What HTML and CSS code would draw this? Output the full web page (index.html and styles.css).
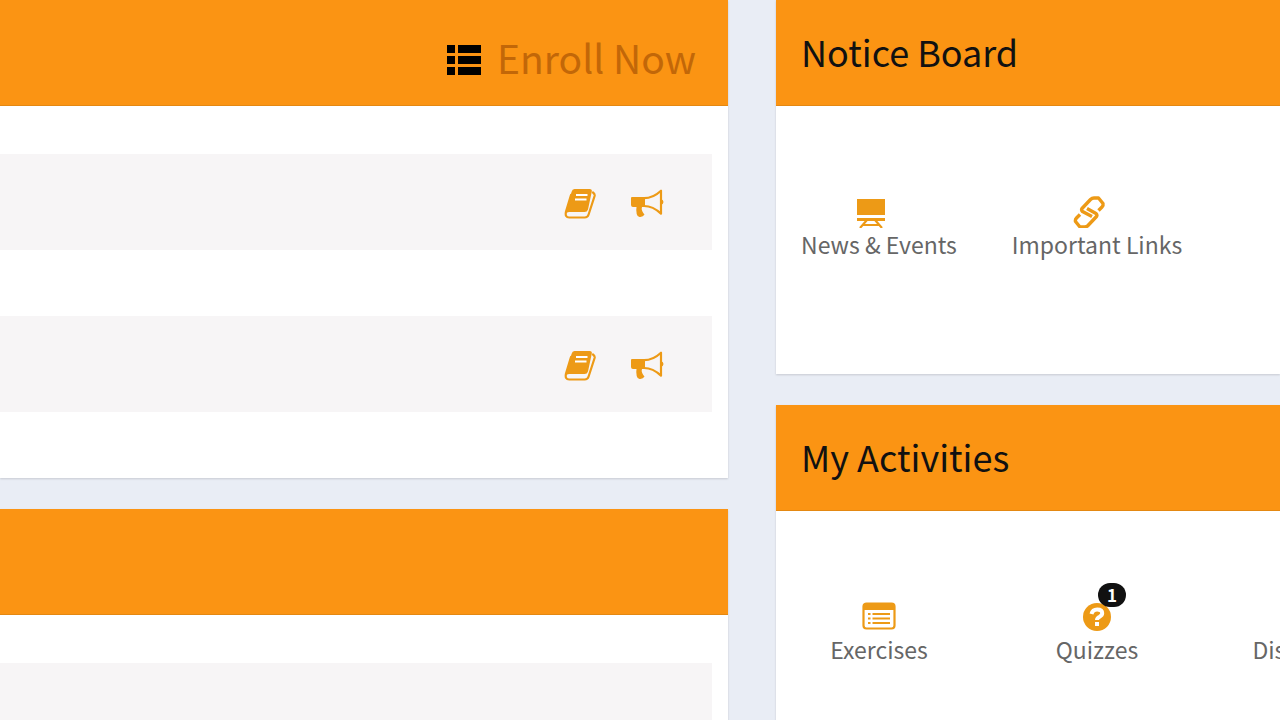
FILE: index.html
```html
<!DOCTYPE html>
<html lang="en">
<head>
  <meta charset="UTF-8">
  <title>Dashboard</title>
  <link rel="stylesheet" href="styles.css">
</head>
<body>
  <svg class="sprite" aria-hidden="true">
    <symbol id="book" viewBox="0 0 32 32">
      <path fill="currentColor" d="M10.500 1H25.500q3 0 2.200 3L24 21.500q-.8 2.500-3.500 2.500H5q-2 0-3 1.500L7.500 4q.8-3 3-3z"/>
      <path fill="none" stroke="currentColor" stroke-width="2.200" stroke-linejoin="round" stroke-linecap="round" d="M7 7 2 23.500q-1.300 6 3.200 6h15.500q3 0 3.900-3L30.600 8q.5-2-1.600-3.500"/>
      <path fill="none" stroke="#fff" stroke-width="2" d="M12 7h11.500M11 11.500h11.500"/>
    </symbol>
    <symbol id="bullhorn" viewBox="0 0 34 30">
      <path fill="currentColor" d="M2 8h13v10h-3q-.8 2 .2 4 1 2 2.300 3.600-1.500 2.800-5 2.400-2.200-.4-2.800-3-.8-3.600-.2-7H3q-2 0-2-2V9q0-1 1-1z"/>
      <path fill="none" stroke="currentColor" stroke-width="2.200" stroke-linejoin="round" d="M14 9.200q9 0 17-7.500v23Q23 17 14 17"/>
      <path fill="currentColor" d="M31 10q2.500 1 2.500 3T31 16z"/>
    </symbol>
  </svg>

  <main class="dashboard">
    <div class="column">
      <section class="box">
        <header class="box-header right">
          <a href="#" class="enroll">
            <svg class="list-icon" viewBox="0 -6 34 36" aria-hidden="true">
              <path d="M0 0h8v8H0zM11 0h23v8H11zM0 11h8v8H0zM11 11h23v8H11zM0 22h8v8H0zM11 22h23v8H11z"/>
            </svg>
            Enroll Now
          </a>
        </header>
        <div class="box-body courses">
          <div class="course">
            <a href="#" aria-label="Course book"><svg class="book"><use href="#book"/></svg></a>
            <a href="#" aria-label="Announcements"><svg class="bullhorn"><use href="#bullhorn"/></svg></a>
          </div>
          <div class="course">
            <a href="#" aria-label="Course book"><svg class="book"><use href="#book"/></svg></a>
            <a href="#" aria-label="Announcements"><svg class="bullhorn"><use href="#bullhorn"/></svg></a>
          </div>
        </div>
      </section>

      <section class="box">
        <header class="box-header"></header>
        <div class="box-body courses">
          <div class="course"></div>
        </div>
      </section>
    </div>

    <div class="column">
      <section class="box">
        <header class="box-header"><h2>Notice Board</h2></header>
        <div class="box-body tiles">
          <a href="#" class="tile">
            <svg class="tile-icon offset" viewBox="0 0 34 34" aria-hidden="true">
              <path fill="currentColor" d="M3 5h28v16H3zM3 24h28v3H3z"/>
              <path fill="none" stroke="currentColor" stroke-width="2.200" d="M13 26 6 34M21 26l7 8M9 31h16"/>
            </svg>
            News &amp; Events
          </a>
          <a href="#" class="tile">
            <svg class="tile-icon offset" viewBox="0 0 34 34" aria-hidden="true">
              <g fill="none" stroke="currentColor" stroke-width="3.400" stroke-linejoin="round">
                <path d="M20 22.500 10.500 17.500Q9 16 10 14.500L18.500 5.500Q20 4 22 4H26.500L31 9.500Q31.500 11.500 30 13L26.500 16.500"/>
                <path d="M15 14.500 24 19.500Q25.500 21 24.500 22.500L16 31.500Q14.500 33 12.500 33H8L3.500 27.500Q3 25.500 4.500 24L8 20.500"/>
              </g>
            </svg>
            Important Links
          </a>
        </div>
      </section>

      <section class="box">
        <header class="box-header"><h2>My Activities</h2></header>
        <div class="box-body tiles">
          <a href="#" class="tile">
            <svg class="tile-icon" viewBox="0 0 34 34" aria-hidden="true">
              <rect x="1.500" y="4.500" width="31" height="25" rx="3" fill="none" stroke="currentColor" stroke-width="2.200"/>
              <path fill="currentColor" d="M2 5h30v6H2z"/>
              <path stroke="currentColor" stroke-width="2" d="M6 15h2.500M6 19.500h2.500M6 24h2.500M10.500 15H28M10.500 19.500H28M10.500 24H28"/>
            </svg>
            Exercises
          </a>
          <a href="#" class="tile">
            <span class="icon-wrap">
              <svg class="tile-icon" viewBox="0 0 34 34" aria-hidden="true">
                <circle cx="17" cy="18" r="14" fill="currentColor"/>
                <path fill="none" stroke="#fff" stroke-width="4" d="M11.500 15q1-4.500 5.700-4.500 5 0 5 3.800 0 2-2.600 3.400-2.600 1.300-2.600 3.300"/>
                <path fill="#fff" d="M15 23h4v4h-4z"/>
              </svg>
              <span class="badge">1</span>
            </span>
            Quizzes
          </a>
          <a href="#" class="tile">
            <svg class="tile-icon" viewBox="0 0 34 34" aria-hidden="true">
              <path fill="currentColor" d="M3 6h28v18H15l-7 6v-6H3z"/>
            </svg>
            Discussions
          </a>
        </div>
      </section>
    </div>
  </main>
</body>
</html>
```
FILE: styles.css
```css
* {
  box-sizing: border-box;
}

body {
  margin: 0;
  background: #e9edf5;
  color: #666;
  font-family: "Noto Sans CJK SC", "Open Sans", sans-serif;
  overflow: hidden;
}

a {
  color: inherit;
  text-decoration: none;
}

svg {
  display: block;
}

.sprite {
  display: none;
}

.dashboard {
  display: grid;
  grid-template-columns: 728fr 504fr;
  gap: 48px;
}

.column {
  display: flex;
  flex-direction: column;
  gap: 31px;
  min-width: 0;
}

.box {
  background: #fff;
  box-shadow: 0 1px 2px rgba(0, 0, 0, 0.15);
}

.box-header {
  display: flex;
  height: 106px;
  padding: 25px;
  background: #fb9413;
  border-bottom: 1px solid #e48812;
}

.box-header h2 {
  margin: 0;
  color: #111;
  font-size: 36px;
  font-weight: 400;
  line-height: 52px;
}

.box-header.right {
  justify-content: flex-end;
  padding: 30px 32px;
}

.enroll {
  display: flex;
  align-items: center;
  gap: 16px;
  height: 54px;
  color: #c26708;
  font-size: 39px;
  line-height: 50px;
}

.list-icon {
  width: 34px;
  height: 36px;
  fill: #000;
}

/* course rows */
.courses {
  display: flex;
  flex-direction: column;
  gap: 66px;
  padding: 48px 16px 66px 0;
}

.course {
  display: flex;
  align-items: center;
  justify-content: flex-end;
  gap: 34px;
  height: 96px;
  padding: 3px 48px 0 0;
  background: #f7f5f6;
  color: #ed9a16;
}

.book {
  width: 32px;
  height: 32px;
}

.bullhorn {
  width: 34px;
  height: 30px;
}

/* icon tiles */
.tiles {
  display: grid;
  grid-template-columns: repeat(3, 218px);
  height: 268px;
  margin-left: -6px;
  padding-top: 88px;
  overflow: hidden;
}

.tile {
  display: flex;
  flex-direction: column;
  align-items: center;
  font-size: 23px;
  line-height: 32px;
  white-space: nowrap;
}

.tile-icon {
  width: 34px;
  height: 34px;
  color: #ed9a16;
}

.tile-icon.offset {
  margin-right: 16px;
}

.icon-wrap {
  position: relative;
}

.badge {
  position: absolute;
  top: -16px;
  left: 18px;
  width: 28px;
  height: 24px;
  border-radius: 12px;
  background: #111;
  color: #fff;
  font-size: 17px;
  font-weight: 700;
  line-height: 24px;
  text-align: center;
}
```
